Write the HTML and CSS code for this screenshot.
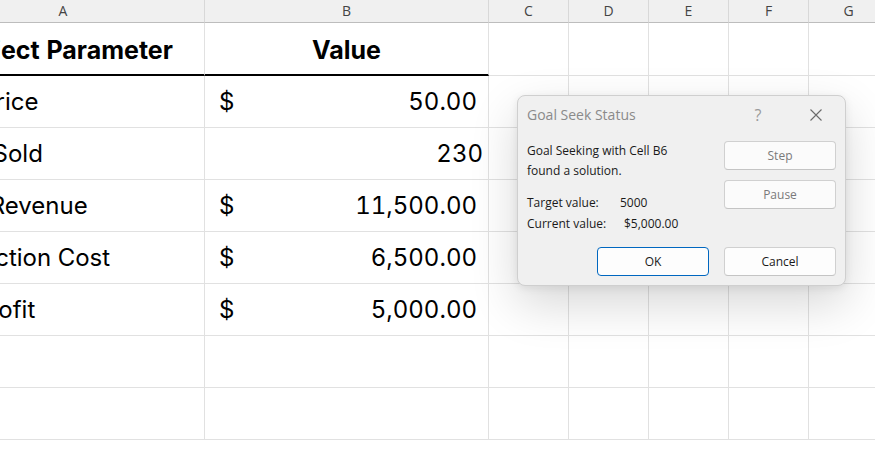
FILE: index.html
```html
<!DOCTYPE html>
<html lang="en">
<head>
    <meta charset="UTF-8">
    <meta name="viewport" content="width=device-width, initial-scale=1.0">
    <title>Goal Seek Status</title>
    <link rel="stylesheet" href="styles.css">
</head>
<body>
    <div class="sheet">
        <div class="row head">
            <div class="col">A</div><div class="col">B</div><div class="col">C</div><div class="col">D</div><div class="col">E</div><div class="col">F</div><div class="col">G</div>
        </div>
        <div class="row first">
            <div class="cell title-cell underline">Project Parameter</div>
            <div class="cell title-cell underline">Value</div>
            <div class="cell"></div><div class="cell"></div><div class="cell"></div><div class="cell"></div><div class="cell"></div>
        </div>
        <div class="row">
            <div class="cell label">Unit Price</div>
            <div class="cell money"><span>$</span><span>50.00</span></div>
            <div class="cell"></div><div class="cell"></div><div class="cell"></div><div class="cell"></div><div class="cell"></div>
        </div>
        <div class="row">
            <div class="cell label">Units Sold</div>
            <div class="cell number">230</div>
            <div class="cell"></div><div class="cell"></div><div class="cell"></div><div class="cell"></div><div class="cell"></div>
        </div>
        <div class="row">
            <div class="cell label">Total Revenue</div>
            <div class="cell money"><span>$</span><span>11,500.00</span></div>
            <div class="cell"></div><div class="cell"></div><div class="cell"></div><div class="cell"></div><div class="cell"></div>
        </div>
        <div class="row">
            <div class="cell label">Production Cost</div>
            <div class="cell money"><span>$</span><span>6,500.00</span></div>
            <div class="cell"></div><div class="cell"></div><div class="cell"></div><div class="cell"></div><div class="cell"></div>
        </div>
        <div class="row">
            <div class="cell label">Net Profit</div>
            <div class="cell money"><span>$</span><span>5,000.00</span></div>
            <div class="cell"></div><div class="cell"></div><div class="cell"></div><div class="cell"></div><div class="cell"></div>
        </div>
        <div class="row">
            <div class="cell"></div><div class="cell"></div><div class="cell"></div><div class="cell"></div><div class="cell"></div><div class="cell"></div><div class="cell"></div>
        </div>
        <div class="row">
            <div class="cell"></div><div class="cell"></div><div class="cell"></div><div class="cell"></div><div class="cell"></div><div class="cell"></div><div class="cell"></div>
        </div>
    </div>

    <div class="dialog">
        <div class="titlebar">
            <span class="dialog-title">Goal Seek Status</span>
            <span class="help">?</span>
            <span class="close">
                <svg width="12" height="12" viewBox="0 0 12 12">
                    <path d="M0.5 0.5 L11.5 11.5 M11.5 0.5 L0.5 11.5" stroke="#6b6b6b" stroke-width="1.1" fill="none"/>
                </svg>
            </span>
        </div>
        <div class="dialog-body">
            <div class="info">
                <p class="message">Goal Seeking with Cell B6<br>found a solution.</p>
                <div class="line"><span class="lbl target">Target value:</span>5000</div>
                <div class="line"><span class="lbl current">Current value:</span>$5,000.00</div>
            </div>
            <div class="side">
                <button class="btn" disabled>Step</button>
                <button class="btn" disabled>Pause</button>
            </div>
        </div>
        <div class="actions">
            <button class="btn primary">OK</button>
            <button class="btn">Cancel</button>
        </div>
    </div>
</body>
</html>
```

FILE: styles.css
```css
body {
    margin: 0;
    background-color: #ffffff;
    overflow: hidden;
    width: 875px;
    height: 450px;
    position: relative;
}
.sheet {
    margin-left: -78px;
    font-family: Inter, "Liberation Sans", sans-serif;
    color: #000;
}
.row {
    display: grid;
    grid-template-columns: 283px 284px 80px 80px 80px 80px 80px;
    height: 52px;
}
.row.head {
    height: 23px;
}
.row.first {
    height: 53px;
}
.col {
    box-sizing: border-box;
    background-color: #f0f0f0;
    border-right: 1px solid #d8d8d8;
    border-bottom: 1px solid #bdbdbd;
    font-family: "Open Sans", "Noto Sans", sans-serif;
    font-size: 14px;
    color: #444;
    text-align: center;
    line-height: 22px;
}
.cell {
    box-sizing: border-box;
    border-right: 1px solid #e1e1e1;
    border-bottom: 1px solid #e1e1e1;
    font-size: 24px;
    font-variant-numeric: tabular-nums;
    display: flex;
    align-items: center;
}
.title-cell {
    justify-content: center;
    padding-top: 3px;
    font-size: 25px;
    font-weight: 700;
}
.underline {
    border-bottom: 2px solid #000;
}
.label {
    padding-left: 6px;
}
.money {
    justify-content: space-between;
    padding: 0 11px 0 14px;
}
.number {
    justify-content: flex-end;
    padding-right: 5px;
}

.dialog {
    position: absolute;
    left: 517px;
    top: 95px;
    width: 329px;
    height: 191px;
    box-sizing: border-box;
    background-color: #f0f0f0;
    border: 1px solid #cfcfcf;
    border-radius: 8px;
    box-shadow: 0 18px 48px rgba(0,0,0,0.16), 0 2px 8px rgba(0,0,0,0.08);
    font-family: "Open Sans", "Noto Sans", sans-serif;
    font-size: 12px;
    color: #1a1a1a;
}
.titlebar {
    display: flex;
    align-items: center;
    height: 37px;
    padding-left: 9px;
}
.dialog-title {
    flex: 1;
    font-size: 14px;
    color: #8a8a8a;
}
.help {
    width: 20px;
    text-align: center;
    font-size: 16px;
    color: #9a9a9a;
    margin-right: 42px;
}
.close {
    width: 12px;
    height: 12px;
    margin-right: 23px;
    display: flex;
}
.dialog-body {
    display: grid;
    grid-template-columns: 1fr 112px;
    height: 93px;
    padding: 8px 9px 0 9px;
}
.message {
    margin: 0 0 11px 0;
    line-height: 20px;
}
.line {
    line-height: 21px;
}
.lbl {
    display: inline-block;
}
.lbl.target {
    width: 93px;
}
.lbl.current {
    width: 97px;
}
.side {
    display: flex;
    flex-direction: column;
    gap: 10px;
}
.btn {
    box-sizing: border-box;
    width: 112px;
    height: 29px;
    background-color: #fdfdfd;
    border: 1px solid #d0d0d0;
    border-bottom-color: #c4c4c4;
    border-radius: 4px;
    font-family: "Open Sans", "Noto Sans", sans-serif;
    font-size: 12px;
    color: #1a1a1a;
    padding: 0;
}
.btn:disabled {
    color: #7a7a7a;
    background-color: #fbfbfb;
}
.primary {
    border: 1px solid #0067c0;
}
.actions {
    display: flex;
    justify-content: flex-end;
    gap: 15px;
    margin-top: 13px;
    padding-right: 9px;
}
```
